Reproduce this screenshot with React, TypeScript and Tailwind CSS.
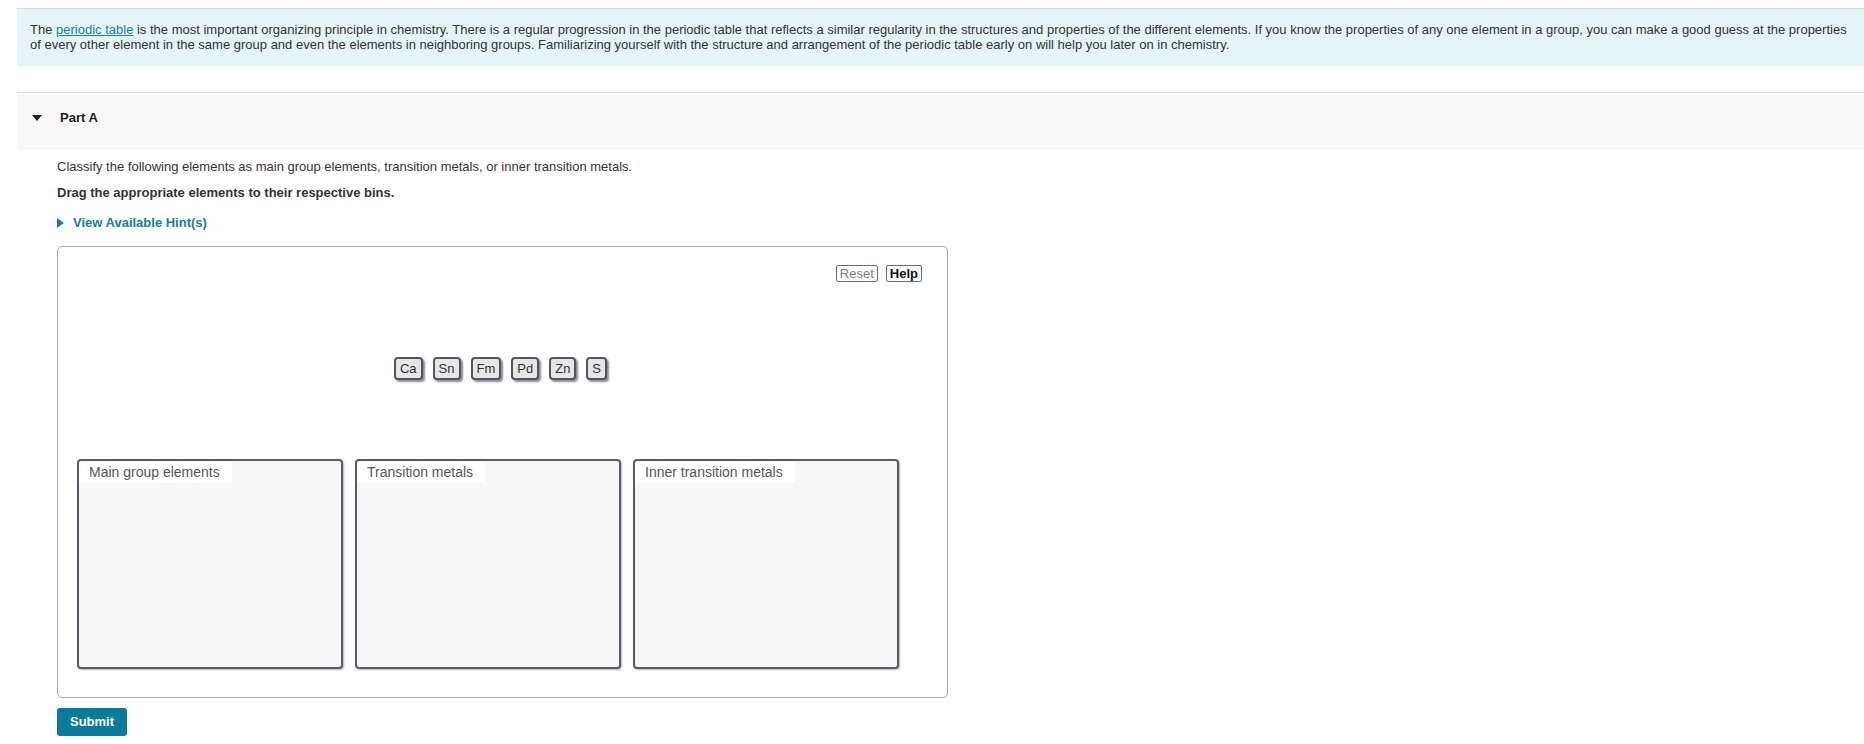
import React from "react";

const tiles = ["Ca", "Sn", "Fm", "Pd", "Zn", "S"];
const bins = ["Main group elements", "Transition metals", "Inner transition metals"];

export default function App() {
  return (
    <div className="w-[1864px] h-[744px] bg-white text-[13px] text-[#333333] font-['Liberation_Sans',Arial,sans-serif]">
      <div className="pt-2 pl-[17px]">
        <div className="border-t border-[#dddddd] bg-[#e5f5f6] h-[58px] pl-[13px] pr-[13px] pt-[13px] leading-[15px]">
          <div className="whitespace-nowrap">
            The{" "}
            <span className="text-[#137fa3] underline">periodic table</span> is the most important organizing
            principle in chemistry. There is a regular progression in the periodic table that reflects a similar
            regularity in the structures and properties of the different elements. If you know the properties of any
            one element in a group, you can make a good guess at the properties
          </div>
          <div className="whitespace-nowrap">
            of every other element in the same group and even the elements in neighboring groups. Familiarizing
            yourself with the structure and arrangement of the periodic table early on will help you later on in
            chemistry.
          </div>
        </div>
      </div>

      <div className="mt-[26px] ml-[17px] border-t border-[#dddddd] bg-[#f8f8f8] h-[58px] pt-[17px]">
        <div className="flex items-center h-[16px]">
          <svg width="10" height="6" viewBox="0 0 10 6" className="ml-[15px] mr-[18px]">
            <polygon points="0,0 10,0 5,6" fill="#222" />
          </svg>
          <span className="text-[13px] font-bold text-[#222] leading-[16px]">Part A</span>
        </div>
      </div>

      <div className="pl-[57px]">
        <div className="mt-[9px] leading-[15px]">
          Classify the following elements as main group elements, transition metals, or inner transition metals.
        </div>
        <div className="mt-[11px] leading-[15px] font-bold">Drag the appropriate elements to their respective bins.</div>
        <div className="mt-[15px] flex items-center leading-[15px] text-[13px] font-bold text-[#147d9e]">
          <svg width="7" height="10" viewBox="0 0 7 10" className="mr-[9px]">
            <polygon points="0,0 7,5 0,10" fill="#147d9e" />
          </svg>
          View Available Hint(s)
        </div>

        <div className="mt-[16px] w-[891px] h-[452px] border border-[#aaaaaa] rounded-[5px] flex flex-col">
          <div className="flex justify-end gap-2 pr-[25px] pt-[18px]">
            <button className="h-[17px] px-[3px] border border-[#60707a] rounded-[2px] text-[13px] leading-[15px] text-[#7a7a7a] bg-white">
              Reset
            </button>
            <button className="h-[17px] px-[3px] border border-[#60707a] rounded-[2px] text-[13px] leading-[15px] font-bold text-[#111] bg-white">
              Help
            </button>
          </div>

          <div className="mt-[75px] flex justify-center gap-[10px] pr-[4px]">
            {tiles.map((t) => (
              <div
                key={t}
                className="h-[23px] px-[4px] border-2 border-[#545465] rounded-[4px] bg-[#e6e6e6] text-[13px] leading-[19px] text-[#333] shadow-[2px_2px_2px_rgba(0,0,0,0.45)]"
              >
                {t}
              </div>
            ))}
          </div>

          <div className="mt-[79px] pl-[19px] flex gap-[12px]">
            {bins.map((b) => (
              <div
                key={b}
                className="w-[266px] h-[210px] border-2 border-[#5a5a6b] rounded-[4px] bg-[#f6f6f6] shadow-[1px_1px_2px_rgba(0,0,0,0.3)]"
              >
                <div className="inline-block bg-white pl-[10px] pr-[12px] h-[21px] text-[14px] leading-[21px] text-[#555] mt-px">
                  {b}
                </div>
              </div>
            ))}
          </div>
        </div>

        <button className="mt-[10px] w-[70px] h-[28px] rounded-[3px] bg-[#0b7a9b] text-white text-[13px] font-bold">
          Submit
        </button>
      </div>
    </div>
  );
}
